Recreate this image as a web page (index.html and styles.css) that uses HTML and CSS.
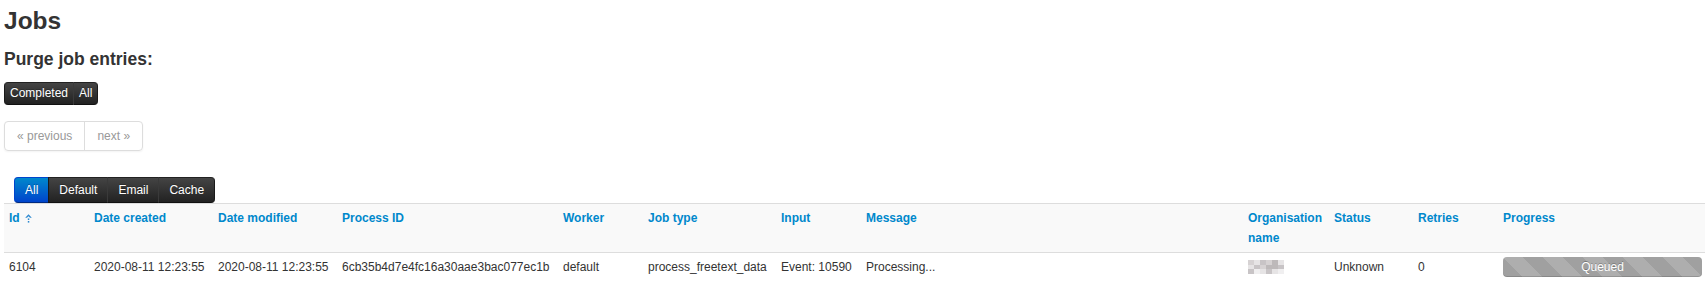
FILE: index.html
```html
<!DOCTYPE html>
<html>
<head>
<meta charset="utf-8">
<title>Jobs</title>
<link rel="stylesheet" href="styles.css">
</head>
<body>
<div class="page">
  <h3 class="title">Jobs</h3>
  <h4 class="subtitle">Purge job entries:</h4>
  <div class="btn-group purge">
    <a class="btn btn-inverse">Completed</a><a class="btn btn-inverse">All</a>
  </div>
  <ul class="pager">
    <li class="pager-item">« previous</li><li class="pager-item">next »</li>
  </ul>
  <div class="btn-group tabs">
    <a class="btn btn-primary tab">All</a><a class="btn btn-inverse tab">Default</a><a class="btn btn-inverse tab">Email</a><a class="btn btn-inverse tab">Cache</a>
  </div>
  <table class="jobs">
    <colgroup>
      <col class="c-id"><col class="c-created"><col class="c-modified"><col class="c-pid"><col class="c-worker"><col class="c-jobtype"><col class="c-input"><col class="c-message"><col class="c-org"><col class="c-status"><col class="c-retries"><col class="c-progress">
    </colgroup>
    <thead>
      <tr>
        <th><a>Id</a><svg class="sort-icon" width="7" height="9" viewBox="0 0 7 9"><path d="M3.5 0.3 L6.8 3.8 L5 3.8 L3.5 2.3 L2 3.8 L0.2 3.8 Z" fill="#2f8ad0"/><rect x="2.8" y="4.4" width="1.5" height="1.6" fill="#2f8ad0"/><rect x="2.8" y="7" width="1.5" height="1.6" fill="#2f8ad0"/></svg></th>
        <th><a>Date created</a></th>
        <th><a>Date modified</a></th>
        <th><a>Process ID</a></th>
        <th><a>Worker</a></th>
        <th><a>Job type</a></th>
        <th><a>Input</a></th>
        <th><a>Message</a></th>
        <th><a>Organisation name</a></th>
        <th><a>Status</a></th>
        <th><a>Retries</a></th>
        <th class="progress-cell"><a>Progress</a></th>
      </tr>
    </thead>
    <tbody>
      <tr>
        <td>6104</td>
        <td>2020-08-11 12:23:55</td>
        <td>2020-08-11 12:23:55</td>
        <td>6cb35b4d7e4fc16a30aae3bac077ec1b</td>
        <td>default</td>
        <td>process_freetext_data</td>
        <td>Event: 10590</td>
        <td>Processing...</td>
        <td><span class="mosaic"><i class="m1"></i><i class="m2"></i><i class="m3"></i><i class="m1"></i><i class="m4"></i><i class="m2"></i><i class="m2"></i><i class="m3"></i><i class="m1"></i><i class="m4"></i><i class="m4"></i><i class="m3"></i><i class="m3"></i><i class="m5"></i><i class="m2"></i><i class="m3"></i><i class="m2"></i><i class="m5"></i></span></td>
        <td>Unknown</td>
        <td>0</td>
        <td class="progress-cell"><div class="progress"><span class="progress-label">Queued</span></div></td>
      </tr>
    </tbody>
  </table>
</div>
</body>
</html>
```
FILE: styles.css
```css
html, body {
  margin: 0;
  padding: 0;
  overflow: hidden;
  background: #fff;
}
body {
  font-family: "Liberation Sans", Arial, sans-serif;
  font-size: 12px;
  line-height: 20px;
  color: #333;
}
.page {
  padding: 1px 0 0 4px;
}
.title {
  margin: 0;
  font-size: 24.5px;
  line-height: 40px;
  font-weight: bold;
  color: #333;
}
.subtitle {
  margin: 8px 0 0;
  font-size: 17.5px;
  line-height: 20px;
  font-weight: bold;
  color: #333;
}
.btn-group {
  display: flex;
  width: max-content;
}
.btn {
  display: block;
  color: #fff;
  text-shadow: 0 -1px 0 rgba(0, 0, 0, 0.25);
  border: 1px solid #222;
  text-decoration: none;
  cursor: pointer;
}
.btn + .btn {
  margin-left: -1px;
}
.btn:first-child {
  border-radius: 4px 0 0 4px;
}
.btn:last-child {
  border-radius: 0 4px 4px 0;
}
.btn-inverse {
  background: linear-gradient(to bottom, #444 0%, #222 100%);
  border-color: #222 #1a1a1a #111;
}
.btn-inverse + .btn-inverse {
  border-left-color: #3a3a3a;
}
.btn-primary {
  background: linear-gradient(to bottom, #0088cc 0%, #0044cc 100%);
  border-color: #0044cc #0044cc #002a80;
}
.purge {
  margin-top: 13px;
}
.purge .btn {
  padding: 2px 5px;
  line-height: 17px;
  font-size: 12px;
}
.pager {
  display: flex;
  width: max-content;
  margin: 16px 0 0;
  padding: 0;
  list-style: none;
  border: 1px solid #ddd;
  border-radius: 4px;
  box-shadow: 0 1px 2px rgba(0, 0, 0, 0.05);
}
.pager-item {
  padding: 4px 12px;
  line-height: 20px;
  color: #999;
}
.pager-item + .pager-item {
  border-left: 1px solid #ddd;
}
.tabs {
  margin: 26px 0 0 10px;
}
.tab {
  padding: 4px 10px;
  line-height: 16px;
  font-size: 12px;
}
.jobs {
  width: 1701px;
  table-layout: fixed;
  border-collapse: collapse;
  border-spacing: 0;
}
.c-id { width: 85px; }
.c-created { width: 124px; }
.c-modified { width: 124px; }
.c-pid { width: 221px; }
.c-worker { width: 85px; }
.c-jobtype { width: 133px; }
.c-input { width: 85px; }
.c-message { width: 382px; }
.c-org { width: 86px; }
.c-status { width: 84px; }
.c-retries { width: 85px; }
.c-progress { width: 207px; }
.jobs th,
.jobs td {
  padding: 4px 5px;
  line-height: 20px;
  text-align: left;
  vertical-align: top;
  border-top: 1px solid #ddd;
  white-space: nowrap;
}
.jobs th {
  white-space: normal;
  font-weight: bold;
}
.jobs thead tr {
  background: #f9f9f9;
}
.jobs th a {
  color: #0088cc;
  text-decoration: none;
}
.jobs th.progress-cell,
.jobs td.progress-cell {
  padding-right: 3px;
}
.sort-icon {
  display: inline-block;
  margin-left: 5px;
  vertical-align: -1px;
}
.mosaic {
  display: inline-grid;
  grid-template-columns: repeat(6, 6px);
  grid-template-rows: repeat(3, 4.5px);
  vertical-align: top;
  margin-top: 3px;
}
.mosaic i {
  display: block;
}
.m1 { background: #d6d2d3; }
.m2 { background: #e6e4e5; }
.m3 { background: #c8c4c6; }
.m4 { background: #bdb9ba; }
.m5 { background: #f0eff0; }
.progress {
  height: 20px;
  border-radius: 4px;
  background-color: #a0a0a0;
  background-image: linear-gradient(45deg, rgba(255, 255, 255, 0.15) 25%, transparent 25%, transparent 50%, rgba(255, 255, 255, 0.15) 50%, rgba(255, 255, 255, 0.15) 75%, transparent 75%, transparent);
  background-size: 40px 40px;
  box-shadow: inset 0 -1px 0 rgba(0, 0, 0, 0.15);
  text-align: center;
}
.progress-label {
  color: #fff;
  font-size: 12px;
  line-height: 20px;
  text-shadow: 0 -1px 0 rgba(0, 0, 0, 0.25);
}
```
